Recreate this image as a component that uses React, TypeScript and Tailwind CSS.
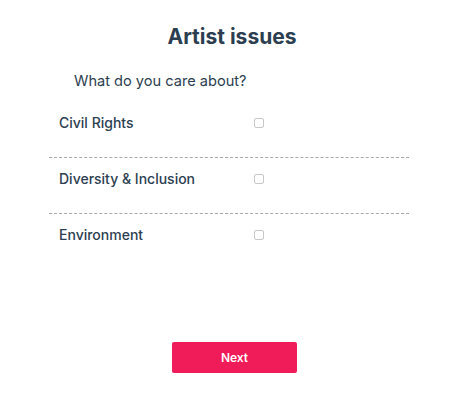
import React from "react";

const items = ["Civil Rights", "Diversity & Inclusion", "Environment"];

export default function App() {
  return (
    <div className="w-[474px] h-[418px] bg-white text-[#2c3e50] font-['Inter','Liberation_Sans',sans-serif] flex flex-col">
      <h1 className="mt-[24px] h-[26px] leading-[26px] text-center pr-[10px] text-[21px] font-bold">
        Artist issues
      </h1>
      <p className="mt-[21px] ml-[74px] h-[20px] leading-[20px] text-[14.6px]">What do you care about?</p>
      <div className="mt-[11px] ml-[49px] w-[360px] flex flex-col">
        {items.map((label, i) => (
          <div
            key={label}
            className={`h-[56px] flex items-start pt-[11px] ${i < items.length - 1 ? "border-b border-dashed border-[#a8a8a8]" : ""}`}
          >
            <span className="ml-[10px] w-[195px] h-[20px] leading-[20px] text-[14px] font-medium">{label}</span>
            <span className="mt-[5px] w-[10px] h-[10px] rounded-[2px] border border-[#c8c8c8] bg-white" />
          </div>
        ))}
      </div>
      <div className="mt-[72px] flex justify-center pr-[5px]">
        <button className="w-[125px] h-[31px] rounded-[2px] bg-[#f01b59] text-white text-[12px] font-semibold">
          Next
        </button>
      </div>
    </div>
  );
}
